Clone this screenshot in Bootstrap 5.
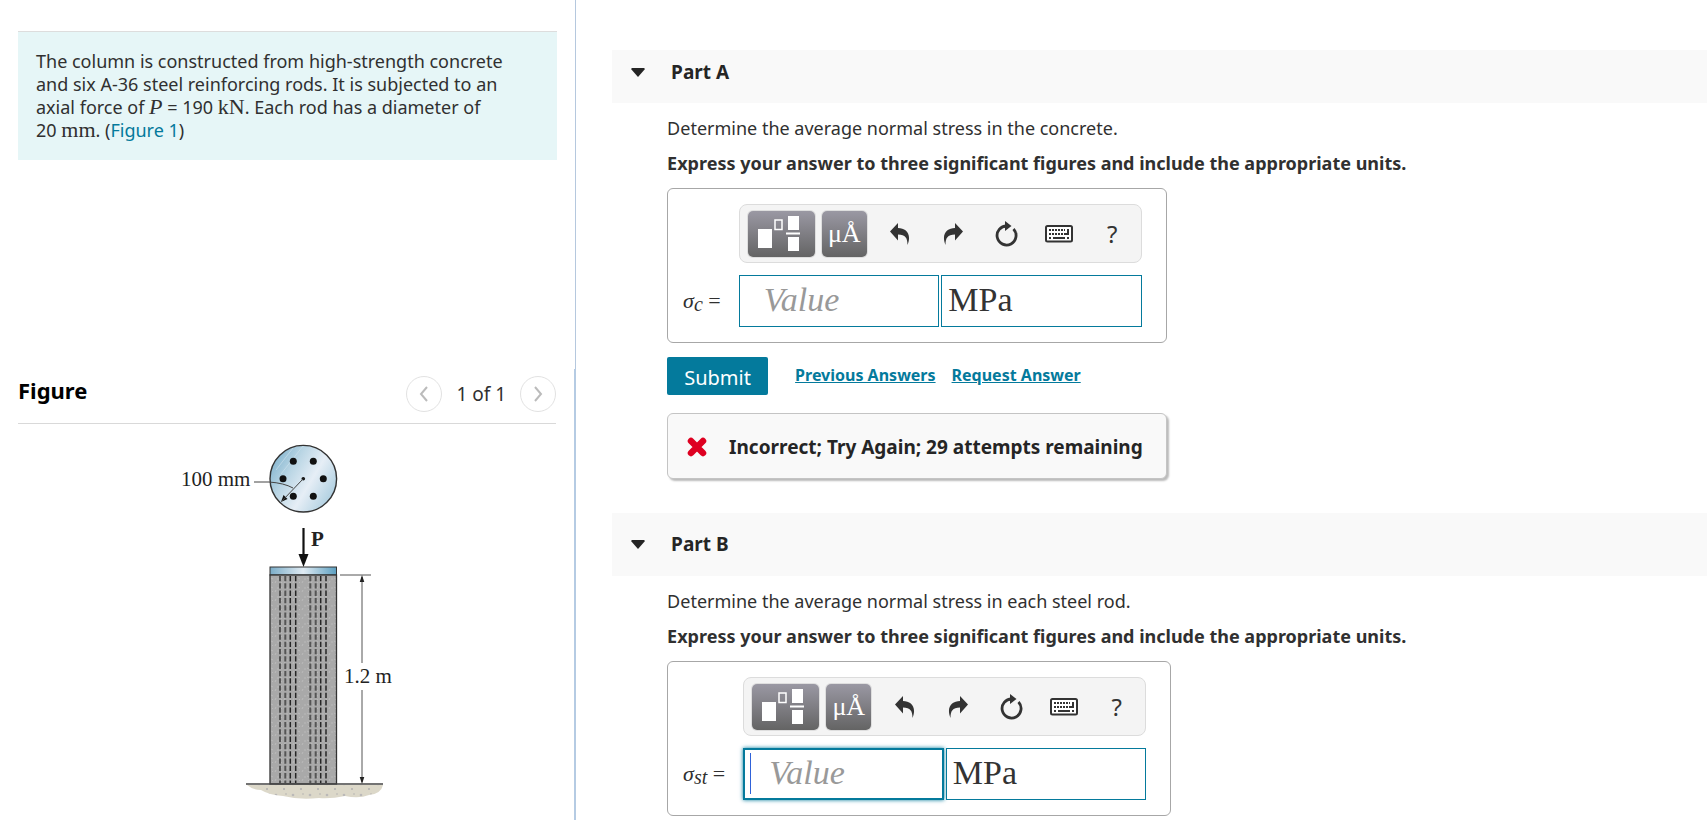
<!DOCTYPE html>
<html lang="en">
<head>
<meta charset="utf-8">
<meta name="viewport" content="width=device-width, initial-scale=1">
<title>Column stress problem</title>
<link href="https://cdn.jsdelivr.net/npm/bootstrap@5.3.0/dist/css/bootstrap.min.css" rel="stylesheet">
<style>
  :root { --teal: #047a9c; --ink: #303030; }
  body { font-family: "Noto Sans", "Open Sans", sans-serif; font-size: 18px; line-height: 23px; color: var(--ink); background: #fff; }
  .math { font-family: "Liberation Serif", serif; font-size: 22px; line-height: 20px; }
  .pane-left { flex: 0 0 33.75%; }
  .pane-problem { flex: 0 0 45%; padding: 31px 18px 0; border-right: 1px solid #b5c8de; }
  .pane-figure { border-right: 2px solid #b5cbe3; padding: 0 18px; min-height: 0; }
  .problem-box { background: #e6f6f7; border-top: 1px solid #ddd; padding: 18px 36px 18px 18px; }
  .problem-box a { color: var(--teal); text-decoration: none; }
  .figure-bar { height: 55px; border-bottom: 1px solid #d9d9d9; padding-bottom: 4px; }
  .figure-title { font-size: 22px; line-height: 28px; font-weight: 700; color: #000; }
  .pager { gap: 14px; }
  .pager-text { font-size: 19px; }
  .pager-btn { width: 36px; height: 36px; border: 1px solid #e2e2e2; border-radius: 50%; background: #fff; padding: 0; }
  .pane-right { padding: 50px 0 0 36px; min-width: 0; }
  .part-bar { background: #f9f9f9; padding-left: 19px; color: #252525; }
  .part-a { height: 53px; padding-bottom: 8px; }
  .part-b { height: 63px; }
  .part-bar button { border: 0; background: none; padding: 0; font-weight: 700; color: inherit; font-size: 19px; gap: 26px; }
  .part-body { padding: 14px 0 0 55px; }
  .question { margin: 0 0 12px; }
  .instruction { margin: 0 0 13px; font-weight: 700; }
  .answer { width: fit-content; border: 1px solid #a7a7a7; border-radius: 6px; padding: 15px 24px 15px 15px; display: grid; grid-template-columns: auto 403px; column-gap: 18px; row-gap: 12px; align-items: center; }
  .tools { grid-column: 2; height: 59px; border: 1px solid #dcdcdc; border-radius: 8px; background: #f4f4f4; padding-left: 8px; }
  .tools button { flex: none; border: 0; background: none; padding: 0; color: #333; }
  .tools .tool-dark { height: 46px; border-radius: 5px; background: linear-gradient(#9a98a3, #646464); color: #fff; box-shadow: 0 0 0 1px #dedede; margin-right: 7px; }
  .tool-tpl { width: 67px; }
  .tool-unit { width: 45px; font-family: "Liberation Serif", serif; font-size: 26px; }
  .tool-plain { width: 53px; height: 46px; font-size: 24px; }
  .tool-plain svg { display: block; margin: 0 auto; }
  .sigma { font-family: "Liberation Serif", serif; font-size: 22px; line-height: 24px; white-space: nowrap; }
  .sigma sub { font-size: 20px; bottom: -3px; }
  .entry { height: 52px; min-width: 0; border: 1px solid var(--teal); background: #fff; font-family: "Liberation Serif", serif; font-size: 34px; color: #333; padding: 0 6px 3px; outline: 0; border-radius: 0; }
  .entry-value { padding-left: 24px; font-style: italic; }
  .entry-value::placeholder { color: #999; opacity: 1; }
  .entry-pair { gap: 2px; }
  .entry-active { border-width: 2px; box-shadow: 0 0 4px var(--teal); }
  .caret { left: 7px; top: 5px; width: 1px; height: 41px; background: #2f62d9; }
  .submit-row { margin: 14px 0 18px; }
  .btn-submit { background: var(--teal); color: #fff; border: 0; border-radius: 2px; width: 101px; height: 38px; padding: 3px 0 0; font-size: 20px; }
  .answer-link { color: var(--teal); font-weight: 700; font-size: 16px; padding-bottom: 2px; }
  .previous-link { margin-left: 27px; }
  .answer-link:hover, .btn-submit:hover { color: #035c76; }
  .feedback { width: fit-content; height: 66px; background: #f9f9f9; border: 1px solid #c4c4c4; border-radius: 6px; box-shadow: 2px 2px 2px #bbb; padding: 2px 23px 0 19px; gap: 22px; font-weight: 700; font-size: 19px; color: #252525; margin-bottom: 34px; }
</style>
</head>
<body>
<svg class="d-none" aria-hidden="true">
  <symbol id="i-tpl" viewBox="0 0 67 46"><path fill="#fff" d="M10 18h14v19H10zM40 5h11v14H40zM40 26h11v14H40zM38 21.500h14v2H38z"/><path fill="none" stroke="#fff" stroke-width="1.500" d="M27 9h7v9.500h-7z"/></symbol>
  <symbol id="i-undo" viewBox="0 0 20 22"><path fill="#333" d="M0 8.500 8 0v5c8 0 14 6 9.500 17 0-7-2-10.500-9.500-10.500v6z"/></symbol>
  <symbol id="i-redo" viewBox="0 0 20 22"><path fill="#333" d="M20 8.500 12 0v5C4 5-2 11 2.500 22c0-7 2-10.500 9.500-10.500v6z"/></symbol>
  <symbol id="i-reset" viewBox="0 0 24 26"><path fill="none" stroke="#333" stroke-width="2.800" d="M13 5a9.500 9.500 0 1 0 6.500 3"/><path fill="#333" d="m11 0 6.500 5-6.500 5z"/></symbol>
  <symbol id="i-keys" viewBox="0 0 28 18"><rect x="1" y="1" width="26" height="15.500" rx="1.500" fill="#fff" stroke="#333" stroke-width="2"/><path fill="none" stroke="#333" stroke-width="2" stroke-dasharray="2 1" d="M4 5h16M4 9h16"/><path fill="none" stroke="#333" stroke-width="2" d="M23 4v5h-3M4 13h2M8 13h12M22 13h2"/></symbol>
  <symbol id="i-tri" viewBox="0 0 14 9"><path fill="#252525" d="M0 1 1 0h12l1 1-7 8z"/></symbol>
</svg>

<main class="d-flex vh-100 overflow-hidden">
  <div class="pane-left d-flex flex-column">
    <section class="pane-problem">
      <div class="problem-box">The column is constructed from high-strength concrete and six A-36 steel reinforcing rods. It is subjected to an axial force of <i class="math">P</i> = 190 <span class="math">kN</span>. Each rod has a diameter of 20&nbsp;<span class="math">mm</span>. (<a href="#figure">Figure 1</a>)</div>
    </section>
    <section class="pane-figure flex-grow-1" id="figure">
      <div class="figure-bar d-flex align-items-center justify-content-between">
        <h2 class="figure-title m-0 pb-2">Figure</h2>
        <div class="pager d-flex align-items-center">
          <button type="button" class="pager-btn" aria-label="Previous figure"><svg class="d-block m-auto" width="10" height="16" viewBox="0 0 10 16"><path d="M8 1 2 8l6 7" fill="none" stroke="#bbb" stroke-width="2"/></svg></button>
          <span class="pager-text">1 of 1</span>
          <button type="button" class="pager-btn" aria-label="Next figure"><svg class="d-block m-auto" width="10" height="16" viewBox="0 0 10 16"><path d="m2 1 6 7-6 7" fill="none" stroke="#bbb" stroke-width="2"/></svg></button>
        </div>
      </div>
      <svg class="d-block mx-auto mt-2" width="230" height="370" viewBox="172 432 230 370" font-family="Liberation Serif, serif" fill="#222">
        <defs>
          <linearGradient id="disc" x1="0" y1="0.200" x2="1" y2="0.800"><stop offset="0" stop-color="#7fb2cd"/><stop offset=".3" stop-color="#b9d5e4"/><stop offset=".6" stop-color="#e6eef6"/><stop offset="1" stop-color="#a5cadd"/></linearGradient>
          <linearGradient id="plate"><stop offset="0" stop-color="#7badc8"/><stop offset=".5" stop-color="#e0ebf3"/><stop offset="1" stop-color="#5c9fc0"/></linearGradient>
          <pattern id="grain" width="9" height="9" patternUnits="userSpaceOnUse"><path fill="#a9a9a9" d="M0 0h9v9H0z"/><path stroke="#bababa" d="m1 2 2 1m2 4 1-2m2-3v2M2 7l1-1"/></pattern>
          <pattern id="ground" width="17" height="11" patternUnits="userSpaceOnUse"><path fill="#dcd8c9" d="M0 0h17v11H0z"/><circle cx="4" cy="3" r="1.300" fill="#bbb9b8"/><circle cx="12" cy="8" r="1" fill="#b3b2b1"/><circle cx="14" cy="2" r=".7" fill="#aaa"/></pattern>
        </defs>
        <circle cx="303.300" cy="478.700" r="33.300" fill="url(#disc)" stroke="#333" stroke-width="1.400"/>
        <path d="m281 474 22-28M276 470l17-22" stroke="#d0e4ee" stroke-width="1" opacity=".6"/>
        <g fill="#111"><circle cx="293.300" cy="461.300" r="3.500"/><circle cx="313.300" cy="461.300" r="3.500"/><circle cx="283" cy="478.700" r="3.500"/><circle cx="323.300" cy="478.700" r="3.500"/><circle cx="293.300" cy="496.300" r="3.500"/><circle cx="313.300" cy="496.300" r="3.500"/><circle cx="303.300" cy="478.700" r="1.800"/><path d="m281 502 2.500-7 4 4z"/></g>
        <path d="M303.300 478.700 282 501M254 482h15q15 1 24 6" fill="none" stroke="#444"/>
        <text x="181" y="486" font-size="21">100 mm</text>
        <path d="M303.500 528v28" stroke="#111" stroke-width="2.200"/><path fill="#111" d="M298.500 554h10l-5 13z"/>
        <text x="311" y="546" font-size="21" font-weight="700">P</text>
        <rect x="270" y="567" width="66.500" height="8" fill="url(#plate)" stroke="#333"/>
        <rect x="270" y="575" width="66.500" height="209" fill="url(#grain)" stroke="#333" stroke-width="1.300"/>
        <path d="M280 576v207M285.300 576v207M310.300 576v207M315.700 576v207" stroke="#555" stroke-width="2" stroke-dasharray="5.300 2"/>
        <path d="M290.300 576v207M295.700 576v207M320.700 576v207M326 576v207" stroke="#252525" stroke-width="1.500" stroke-dasharray="5.300 2"/>
        <path d="M340 575h31M362 577v86M362 690v92" stroke="#555"/>
        <path fill="#222" d="m362 575 2.300 7h-4.600zM362 784l2.300-7h-4.600z"/>
        <text x="344" y="683" font-size="21">1.2 m</text>
        <path fill="url(#ground)" d="M247 785h136q-2 9-14 10-10 4-24 1-14 3-26 2-20 2-36-2-14-1-22-6-8 0-14-5z"/>
        <path d="M246 784h137" stroke="#444" stroke-width="1.400"/>
      </svg>
    </section>
  </div>

  <div class="pane-right flex-grow-1">
    <section>
      <div class="part-bar part-a d-flex align-items-center"><button type="button" class="d-flex align-items-center"><svg width="14" height="9"><use href="#i-tri"/></svg>Part A</button></div>
      <div class="part-body">
        <p class="question">Determine the average normal stress in the concrete.</p>
        <p class="instruction">Express your answer to three significant figures and include the appropriate units.</p>
        <div class="answer">
          <div class="tools d-flex align-items-center">
            <button type="button" class="tool-dark tool-tpl" aria-label="Templates"><svg class="d-block" width="67" height="46"><use href="#i-tpl"/></svg></button>
            <button type="button" class="tool-dark tool-unit">μÅ</button>
            <button type="button" class="tool-plain" aria-label="Undo"><svg width="20" height="22"><use href="#i-undo"/></svg></button>
            <button type="button" class="tool-plain" aria-label="Redo"><svg width="20" height="22"><use href="#i-redo"/></svg></button>
            <button type="button" class="tool-plain" aria-label="Reset"><svg width="24" height="26"><use href="#i-reset"/></svg></button>
            <button type="button" class="tool-plain" aria-label="Keyboard"><svg width="28" height="18"><use href="#i-keys"/></svg></button>
            <button type="button" class="tool-plain">?</button>
          </div>
          <label class="sigma" for="value-a"><i>σ<sub>c</sub></i> =</label>
          <div class="d-flex entry-pair">
            <input class="entry entry-value w-50" id="value-a" type="text" placeholder="Value">
            <input class="entry w-50" type="text" value="MPa" aria-label="Units for part A">
          </div>
        </div>
        <div class="d-flex align-items-center submit-row">
          <button type="button" class="btn-submit">Submit</button>
          <a class="answer-link previous-link" href="#previous">Previous Answers</a>
          <a class="answer-link ms-3" href="#request">Request Answer</a>
        </div>
        <div class="feedback d-flex align-items-center"><svg width="20" height="20" viewBox="0 0 20 20"><path d="m4 4 12 12M16 4 4 16" stroke="#de0021" stroke-width="6.500" stroke-linecap="round"/></svg>Incorrect; Try Again; 29 attempts remaining</div>
      </div>
    </section>
    <section>
      <div class="part-bar part-b d-flex align-items-center"><button type="button" class="d-flex align-items-center"><svg width="14" height="9"><use href="#i-tri"/></svg>Part B</button></div>
      <div class="part-body">
        <p class="question">Determine the average normal stress in each steel rod.</p>
        <p class="instruction">Express your answer to three significant figures and include the appropriate units.</p>
        <div class="answer">
          <div class="tools d-flex align-items-center">
            <button type="button" class="tool-dark tool-tpl" aria-label="Templates"><svg class="d-block" width="67" height="46"><use href="#i-tpl"/></svg></button>
            <button type="button" class="tool-dark tool-unit">μÅ</button>
            <button type="button" class="tool-plain" aria-label="Undo"><svg width="20" height="22"><use href="#i-undo"/></svg></button>
            <button type="button" class="tool-plain" aria-label="Redo"><svg width="20" height="22"><use href="#i-redo"/></svg></button>
            <button type="button" class="tool-plain" aria-label="Reset"><svg width="24" height="26"><use href="#i-reset"/></svg></button>
            <button type="button" class="tool-plain" aria-label="Keyboard"><svg width="28" height="18"><use href="#i-keys"/></svg></button>
            <button type="button" class="tool-plain">?</button>
          </div>
          <label class="sigma" for="value-b"><i>σ<sub>st</sub></i> =</label>
          <div class="d-flex entry-pair position-relative">
            <input class="entry entry-value entry-active w-50" id="value-b" type="text" placeholder="Value">
            <input class="entry w-50" type="text" value="MPa" aria-label="Units for part B">
            <span class="caret position-absolute"></span>
          </div>
        </div>
      </div>
    </section>
  </div>
</main>
<script src="https://cdn.jsdelivr.net/npm/bootstrap@5.3.0/dist/js/bootstrap.bundle.min.js"></script>
</body>
</html>
